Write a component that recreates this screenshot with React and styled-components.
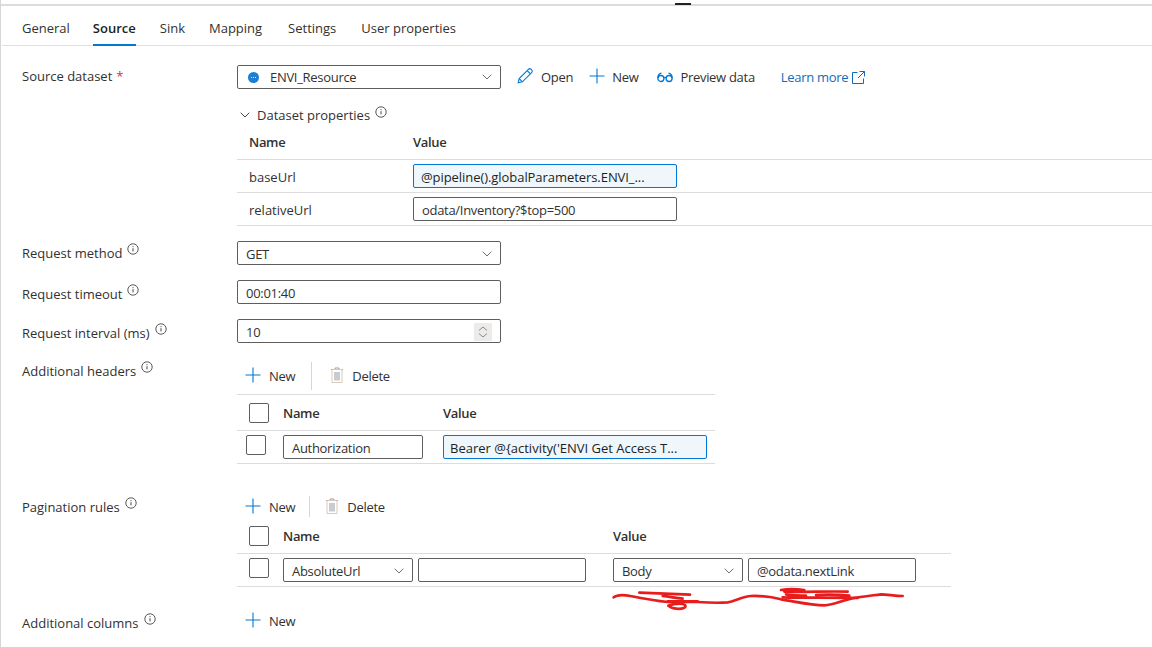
import React from 'react'
import styled, { createGlobalStyle } from 'styled-components'

const GlobalStyle = createGlobalStyle`
  html, body {
    margin: 0;
    padding: 0;
    background: #fff;
  }
  * {
    box-sizing: border-box;
  }
`

const Page = styled.div`
  position: relative;
  width: 1152px;
  height: 647px;
  overflow: hidden;
  padding-top: 4px;
  border-left: 1px solid #d6d6d6;
  color: #323130;
  font-family: 'Open Sans', 'Noto Sans', sans-serif;
  font-size: 13px;
  line-height: 20px;
`

const TopStrip = styled.div`
  height: 2px;
  margin-left: -1px;
  background: #dcdcdc;
`

const Handle = styled.div`
  position: absolute;
  top: 3px;
  left: 674px;
  width: 16px;
  height: 2px;
  background: #222;
`

const Tabs = styled.nav`
  display: flex;
  height: 40px;
  padding-left: 20px;
  margin-left: 1px;
  border-bottom: 1px solid #e1dfdd;
`

const Tab = styled.div`
  padding-top: 12px;
  height: 40px;
  margin-right: ${(p) => p.$gap}px;
  color: ${(p) => (p.$active ? '#201f1e' : '#323130')};
  font-weight: ${(p) => (p.$active ? 600 : 400)};
  border-bottom: 2px solid ${(p) => (p.$active ? '#0078d4' : 'transparent')};
`

const Form = styled.div`
  padding-left: 21px;
`

const Row = styled.div`
  display: grid;
  grid-template-columns: 215px 1fr;
  margin-top: ${(p) => p.$top || 0}px;
`

const Label = styled.div`
  padding-top: ${(p) => p.$pad ?? 1}px;
  white-space: nowrap;
  color: #323130;
`

const Required = styled.span`
  margin-left: 4px;
  color: #d13438;
`

const InfoIcon = styled.svg`
  width: 12px;
  height: 12px;
  margin-left: 5px;
  vertical-align: 3px;
  color: #484644;
`

const Info = () => (
  <InfoIcon viewBox="0 0 12 12" fill="none" stroke="currentColor">
    <circle cx="6" cy="6" r="5.2" strokeWidth="0.9" />
    <path d="M6 5.2v3.2M6 3.2v1" strokeWidth="1" />
  </InfoIcon>
)

const Line = styled.div`
  display: flex;
  align-items: center;
`

const Field = styled.div`
  display: flex;
  align-items: center;
  flex: none;
  width: ${(p) => p.$w}px;
  height: 24px;
  margin-left: ${(p) => p.$left || 0}px;
  padding: ${(p) => (p.$flat ? 0 : 1)}px 8px 0 ${(p) => p.$pad ?? 8}px;
  border: 1px solid ${(p) => (p.$focus ? '#0078d4' : '#605e5c')};
  border-radius: 2px;
  background: ${(p) => (p.$focus ? '#eff6fc' : '#fff')};
  color: ${(p) => (p.$focus ? '#201f1e' : '#323130')};
  letter-spacing: ${(p) => p.$track ?? -0.3}px;
  white-space: nowrap;
  overflow: hidden;

  & > span {
    flex: 1;
  }
`

const DatasetDot = styled.svg`
  width: 11px;
  height: 11px;
  margin-right: 11px;
  flex: none;
`

const Chevron = styled.svg`
  width: 10px;
  height: 6px;
  flex: none;
  color: ${(p) => p.$color || '#605e5c'};
`

const ChevronDown = (props) => (
  <Chevron viewBox="0 0 10 6" fill="none" stroke="currentColor" strokeWidth="0.9" {...props}>
    <path d="M0.7 0.7L5 5l4.3-4.3" />
  </Chevron>
)

const Spinner = styled.div`
  display: flex;
  flex-direction: column;
  align-items: center;
  justify-content: center;
  gap: 2px;
  width: 18px;
  height: 18px;
  background: #edebe9;
`

const SpinArrow = styled.svg`
  display: block;
  width: 10px;
  height: 5px;
  color: #8a8886;
`

const Actions = styled.div`
  display: flex;
  align-items: center;
  margin-left: 16px;
`

const Action = styled.div`
  display: flex;
  align-items: center;
  margin-left: ${(p) => p.$left || 0}px;
  color: #323130;
  letter-spacing: -0.3px;
  white-space: nowrap;

  svg {
    flex: none;
  }
`

const LearnMore = styled(Action)`
  color: #0f6cbd;
`

const ActionIcon = styled.svg`
  width: ${(p) => p.$w || 16}px;
  height: 16px;
  margin-right: ${(p) => p.$gap ?? 8}px;
  margin-bottom: 2px;
  color: ${(p) => p.$color || '#0078d4'};
`

const Pencil = () => (
  <ActionIcon viewBox="0 0 16 16" fill="none" stroke="currentColor" strokeWidth="1.1" $gap={8}>
    <path d="M1.2 14.8l1-4.2L11.4 1.4c.8-.8 2-.8 2.8 0l.4.4c.8.8.8 2 0 2.8L5.4 13.8z" />
    <path d="M2.2 10.6l3.2 3.2M10.2 2.6l3.2 3.2" />
  </ActionIcon>
)

const Plus = ({ gap }) => (
  <ActionIcon viewBox="0 0 16 16" fill="none" stroke="currentColor" strokeWidth="1.1" $gap={gap ?? 8}>
    <path d="M8 0.5v15M0.5 8h15" />
  </ActionIcon>
)

const Glasses = () => (
  <ActionIcon viewBox="0 0 16 16" fill="none" stroke="currentColor" strokeWidth="1.3" $gap={7}>
    <circle cx="3.9" cy="10.5" r="3" />
    <circle cx="12.1" cy="10.5" r="3" />
    <path d="M6.7 9.8c.8-.5 1.8-.5 2.6 0M0.9 10c0-2.4 1.2-4.6 3.6-4.9M15.1 10c0-2.4-1.2-4.6-3.6-4.9" />
  </ActionIcon>
)

const ExternalIcon = styled.svg`
  width: 13px;
  height: 13px;
  margin-left: 4px;
  color: #0f6cbd;
`

const External = () => (
  <ExternalIcon viewBox="0 0 13 13" fill="none" stroke="currentColor" strokeWidth="1">
    <path d="M5.5 1.5H0.5v11h11V7.5" />
    <path d="M7.5 0.5h5v5M12.5 0.5L6 7" />
  </ExternalIcon>
)

const Trash = ({ gap }) => (
  <ActionIcon viewBox="0 0 14 16" fill="none" $w={14} $gap={gap} $color="#a19f9d">
    <path d="M1 2.5h12" stroke="#a19f9d" strokeWidth="1" />
    <path d="M5 2.5V1h4v1.5" stroke="#a19f9d" strokeWidth="1" />
    <path d="M2 2.5v13h10v-13z" stroke="#d8c9ba" strokeWidth="1" />
    <rect x="4" y="5" width="6" height="8.5" fill="#c8ccd2" />
  </ActionIcon>
)

const Collapse = styled.div`
  display: flex;
  align-items: center;
  height: 24px;
  margin: 14px 0 0 215px;
  padding-left: 3px;

  ${Chevron} {
    margin-right: 7px;
    color: #323130;
  }

  ${InfoIcon} {
    margin-bottom: 7px;
  }
`

const PropsTable = styled.div`
  margin-left: 215px;
`

const PropsRow = styled.div`
  display: grid;
  grid-template-columns: 164px 264px;
  align-items: center;
  height: 33px;
  padding-left: 12px;
  border-bottom: 1px solid #dcdcdc;
  font-weight: ${(p) => (p.$head ? 600 : 400)};
  letter-spacing: ${(p) => (p.$head ? '-0.3px' : '0')};
  padding-bottom: ${(p) => (p.$head ? 2 : 0)}px;
`

const RowName = styled.div`
  padding-top: 1px;
`

const Toolbar = styled.div`
  display: flex;
  align-items: center;
  height: ${(p) => p.$h}px;
  padding-left: 8px;
  margin-top: ${(p) => p.$top || 0}px;
  margin-bottom: ${(p) => p.$bottom || 0}px;
`

const ToolbarDivider = styled.div`
  width: 1px;
  align-self: stretch;
  margin: 0 ${(p) => p.$after}px 0 ${(p) => p.$before}px;
  background: #d6d6d6;
`

const Grid = styled.div`
  width: ${(p) => p.$w}px;
  border-top: ${(p) => (p.$lined ? '1px solid #dcdcdc' : '0')};
`

const GridRow = styled.div`
  display: flex;
  align-items: ${(p) => (p.$head ? 'center' : 'flex-start')};
  height: ${(p) => p.$h}px;
  padding-top: ${(p) => p.$top}px;
  padding-left: ${(p) => p.$indent}px;
  border-bottom: 1px solid #dcdcdc;
`

const Check = styled.div`
  flex: none;
  width: 20px;
  height: 20px;
  border: 1px solid #605e5c;
  border-radius: 2px;
  background: #fff;
`

const HeadCell = styled.div`
  width: ${(p) => p.$w}px;
  margin-left: ${(p) => p.$left || 0}px;
  font-weight: 600;
  letter-spacing: -0.3px;
  flex: none;
`

const ScribbleSvg = styled.svg`
  position: absolute;
  top: 540px;
  left: 590px;
  width: 370px;
  height: 80px;
  pointer-events: none;
`

const Scribble = () => (
  <ScribbleSvg viewBox="0 0 1110 240" fill="none" stroke="#e81c1c" strokeWidth="8" strokeLinecap="round" strokeLinejoin="round">
    <path d="M68 172c10-8 30-8 50-4 40 8 70 14 112 18 30 2 60-2 90 0 30 2 60 4 90 1 22-3 44-18 70-19 30-1 60 2 90 10 50 8 90 18 130 18 30-1 50-14 80-20 30-6 60-9 90-13 20 0 40 5 65 5" />
    <path d="M145 158c50 2 100 4 152 6M215 168c20 2 40 6 60 8M230 184c30 0 60 0 90 0" />
    <path d="M232 197c10 10 35 12 48 6 8-5 2-12-14-12-14 0-24 2-34 6" />
    <path d="M570 150c25-4 45-3 70 0M580 155c60 2 130-2 190 0M585 163c20 4 50 3 60 4M675 165c30-2 60-2 100 2M575 172c70 2 150 0 225 2" />
  </ScribbleSvg>
)

export default function App() {
  return (
    <Page>
      <GlobalStyle />
      <TopStrip />
      <Handle />
      <Tabs>
        <Tab $gap={23}>General</Tab>
        <Tab $active $gap={24}>Source</Tab>
        <Tab $gap={24}>Sink</Tab>
        <Tab $gap={26}>Mapping</Tab>
        <Tab $gap={25}>Settings</Tab>
        <Tab $gap={0}>User properties</Tab>
      </Tabs>
      <Form>
        <Row $top={19}>
          <Label>
            Source dataset<Required>*</Required>
          </Label>
          <Line>
            <Field $w={264} $pad={10} $flat>
              <DatasetDot viewBox="0 0 11 11">
                <circle cx="5.5" cy="5.5" r="5.5" fill="#1b7fd6" />
                <path d="M3 5.5h5" stroke="#d6e9f8" strokeWidth="1.2" strokeDasharray="1 1" />
              </DatasetDot>
              <span>ENVI_Resource</span>
              <ChevronDown />
            </Field>
            <Actions>
              <Action>
                <Pencil />
                Open
              </Action>
              <Action $left={16}>
                <Plus gap={7} />
                New
              </Action>
              <Action $left={19}>
                <Glasses />
                Preview data
              </Action>
              <LearnMore $left={26}>
                Learn more
                <External />
              </LearnMore>
            </Actions>
          </Line>
        </Row>

        <Collapse>
          <ChevronDown />
          Dataset properties
          <Info />
        </Collapse>
        <PropsTable>
          <PropsRow $head>
            <div>Name</div>
            <div>Value</div>
          </PropsRow>
          <PropsRow>
            <RowName>baseUrl</RowName>
            <Field $w={264} $focus $pad={7} $track={-0.06}>
              @pipeline().globalParameters.ENVI_...
            </Field>
          </PropsRow>
          <PropsRow>
            <RowName>relativeUrl</RowName>
            <Field $w={264}>odata/Inventory?$top=500</Field>
          </PropsRow>
        </PropsTable>

        <Row $top={15}>
          <Label $pad={2}>
            Request method
            <Info />
          </Label>
          <Field $w={264}>
            <span>GET</span>
            <ChevronDown />
          </Field>
        </Row>
        <Row $top={15}>
          <Label $pad={4}>
            Request timeout
            <Info />
          </Label>
          <Field $w={264}>00:01:40</Field>
        </Row>
        <Row $top={15}>
          <Label $pad={4}>
            Request interval (ms)
            <Info />
          </Label>
          <Field $w={264}>
            <span>10</span>
            <Spinner>
              <SpinArrow viewBox="0 0 10 5" fill="none" stroke="currentColor">
                <path d="M1 4.5L5 1l4 3.5" />
              </SpinArrow>
              <SpinArrow viewBox="0 0 10 5" fill="none" stroke="currentColor">
                <path d="M1 0.5L5 4l4-3.5" />
              </SpinArrow>
            </Spinner>
          </Field>
        </Row>

        <Row $top={18}>
          <Label $pad={0}>
            Additional headers
            <Info />
          </Label>
          <div>
            <Toolbar $h={28} $top={1} $bottom={4}>
              <Action>
                <Plus gap={8} />
                New
              </Action>
              <ToolbarDivider $before={16} $after={18} />
              <Action>
                <Trash gap={8} />
                Delete
              </Action>
            </Toolbar>
            <Grid $w={478} $lined>
              <GridRow $head $h={36} $top={0} $indent={12}>
                <Check />
                <HeadCell $w={160} $left={14}>
                  Name
                </HeadCell>
                <HeadCell $w={100}>Value</HeadCell>
              </GridRow>
              <GridRow $h={33} $top={4} $indent={9}>
                <Check />
                <Field $w={140} $left={17}>
                  Authorization
                </Field>
                <Field $w={264} $left={20} $focus $pad={6} $track={0}>
                  Bearer @{'{'}activity('ENVI Get Access T...
                </Field>
              </GridRow>
            </Grid>
          </div>
        </Row>

        <Row $top={32}>
          <Label $pad={1}>
            Pagination rules
            <Info />
          </Label>
          <div>
            <Toolbar $h={21}>
              <Action>
                <Plus gap={8} />
                New
              </Action>
              <ToolbarDivider $before={14} $after={15} />
              <Action>
                <Trash gap={8} />
                Delete
              </Action>
            </Toolbar>
            <Grid $w={714}>
              <GridRow $head $h={37} $top={2} $indent={12}>
                <Check />
                <HeadCell $w={330} $left={14}>
                  Name
                </HeadCell>
                <HeadCell $w={100}>Value</HeadCell>
              </GridRow>
              <GridRow $h={33} $top={4} $indent={12}>
                <Check />
                <Field $w={130} $left={14}>
                  <span>AbsoluteUrl</span>
                  <ChevronDown />
                </Field>
                <Field $w={168} $left={5} />
                <Field $w={130} $left={27}>
                  <span>Body</span>
                  <ChevronDown />
                </Field>
                <Field $w={168} $left={5}>
                  @odata.nextLink
                </Field>
              </GridRow>
            </Grid>
          </div>
        </Row>

        <Row $top={23}>
          <Label $pad={3}>
            Additional columns
            <Info />
          </Label>
          <Toolbar $h={22}>
            <Action>
              <Plus gap={8} />
              New
            </Action>
          </Toolbar>
        </Row>
      </Form>
      <Scribble />
    </Page>
  )
}
